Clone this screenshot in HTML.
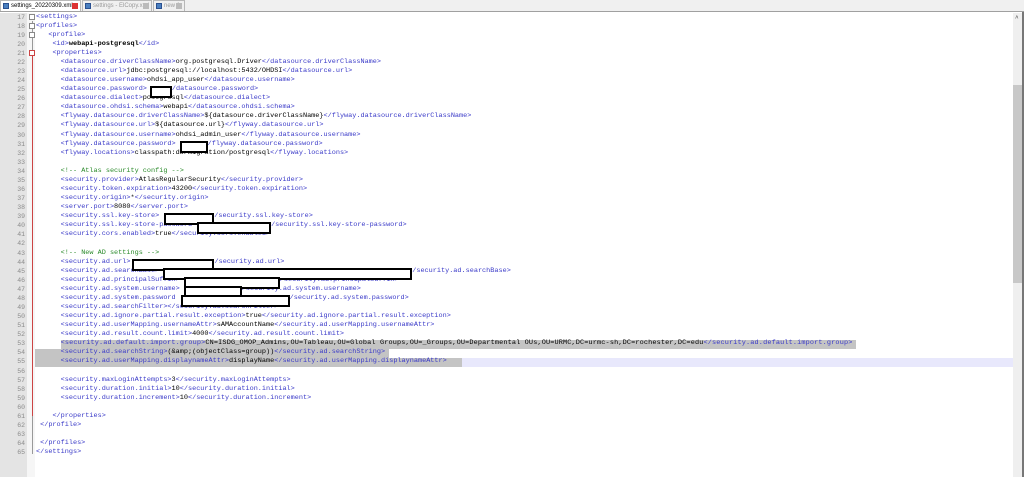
<!DOCTYPE html>
<html><head><meta charset="utf-8"><style>
*{margin:0;padding:0;box-sizing:border-box}
body{width:1024px;height:477px;background:#fff;position:relative;overflow:hidden;font-family:"Liberation Mono",monospace}
.tabbar{position:absolute;left:0;top:0;width:1024px;height:12px;background:#f0f0f0;border-bottom:1px solid #a0a0a0}
.tab{position:absolute;top:0;height:11px;font:6px "Liberation Sans",sans-serif;line-height:11px;padding-left:10px;border:1px solid #b8b8b8;border-bottom:none;white-space:nowrap;overflow:hidden}
.tab i{position:absolute;left:2px;top:2px;width:6px;height:6px;background:#4a7fc0;border:1px solid #2a5090}
.tab b{position:absolute;right:2px;top:2px;width:6px;height:6px;background:#d33;}
.gut{position:absolute;left:0;top:13px;width:27px;height:464px;background:#e4e4e4}
.fold{position:absolute;left:27px;top:13px;width:8px;height:464px;background:#f6f6f6}
.sb{position:absolute;left:1013px;top:13px;width:9px;height:464px;background:#efefef}
.thumb{position:absolute;left:1013px;top:85px;width:9px;height:198px;background:#c8c8c8}
.rb{position:absolute;left:1022px;top:12px;width:2px;height:465px;background:#777}
.ln{position:absolute;left:0;width:25px;text-align:right;font-size:6.5px;color:#8a8a8a;line-height:9.08px}
.code{position:absolute;left:36px;font-size:6.85px;line-height:9.08px;white-space:pre;color:#000}
.t{color:#3a3ac8}.c{color:#2a8a2a}.v{font-weight:bold}
.hl{position:absolute;height:9px}
.r{display:inline-block;height:0;position:relative;vertical-align:baseline}
.r::after{content:"";position:absolute;left:0;right:0;top:-4px;height:8px;border:2px solid #000;background:#fff}
.fb{position:absolute;left:29px;width:6px;height:6px;border:1px solid #888;background:#fff}
</style></head><body>
<div class="tabbar">
<div class="tab" style="left:0;width:81px;background:#fff">settings_20220309.xml<i></i><b></b></div>
<div class="tab" style="left:82px;width:70px;color:#999">settings - ElCopy.xml<i></i><b style="background:#bbb"></b></div>
<div class="tab" style="left:153px;width:32px;color:#999">new 1<i></i><b style="background:#bbb"></b></div>
</div>
<div class="gut"></div><div class="fold"></div>
<div style="position:absolute;left:32px;top:21px;width:1px;height:433px;background:#999"></div>
<div style="position:absolute;left:32px;top:56px;width:1px;height:360px;background:#c44"></div>
<div class="fb" style="top:14px"></div><div class="fb" style="top:23px"></div><div class="fb" style="top:32px"></div><div class="fb" style="top:50px;border-color:#c44"></div>

<div class="hl" style="left:61px;top:340px;width:795px;background:#c4c4c4"></div>
<div class="hl" style="left:35px;top:349px;width:354px;background:#c4c4c4"></div>
<div class="hl" style="left:35px;top:358px;width:978px;background:#e8e8fc"></div>
<div class="hl" style="left:35px;top:358px;width:427px;background:#c4c4c4"></div>

<div class="ln" style="top:12.5px">17<br>18<br>19<br>20<br>21<br>22<br>23<br>24<br>25<br>26<br>27<br>28<br>29<br>30<br>31<br>32<br>33<br>34<br>35<br>36<br>37<br>38<br>39<br>40<br>41<br>42<br>43<br>44<br>45<br>46<br>47<br>48<br>49<br>50<br>51<br>52<br>53<br>54<br>55<br>56<br>57<br>58<br>59<br>60<br>61<br>62<br>63<br>64<br>65</div>
<div class="code" style="top:12.5px"><span class="t">&lt;settings&gt;</span>
<span class="t">&lt;profiles&gt;</span>
   <span class="t">&lt;profile&gt;</span>
    <span class="t">&lt;id&gt;</span><span class="v">webapi-postgresql</span><span class="t">&lt;/id&gt;</span>
    <span class="t">&lt;properties&gt;</span>
      <span class="t">&lt;datasource.driverClassName&gt;</span>org.postgresql.Driver<span class="t">&lt;/datasource.driverClassName&gt;</span>
      <span class="t">&lt;datasource.url&gt;</span>jdbc:postgresql://localhost:5432/OHDSI<span class="t">&lt;/datasource.url&gt;</span>
      <span class="t">&lt;datasource.username&gt;</span>ohdsi_app_user<span class="t">&lt;/datasource.username&gt;</span>
      <span class="t">&lt;datasource.password&gt;</span><span class="r" style="margin-left:3px;width:22px"></span><span class="t">/datasource.password&gt;</span>
      <span class="t">&lt;datasource.dialect&gt;</span>postgresql<span class="t">&lt;/datasource.dialect&gt;</span>
      <span class="t">&lt;datasource.ohdsi.schema&gt;</span>webapi<span class="t">&lt;/datasource.ohdsi.schema&gt;</span>
      <span class="t">&lt;flyway.datasource.driverClassName&gt;</span>${datasource.driverClassName}<span class="t">&lt;/flyway.datasource.driverClassName&gt;</span>
      <span class="t">&lt;flyway.datasource.url&gt;</span>${datasource.url}<span class="t">&lt;/flyway.datasource.url&gt;</span>
      <span class="t">&lt;flyway.datasource.username&gt;</span>ohdsi_admin_user<span class="t">&lt;/flyway.datasource.username&gt;</span>
      <span class="t">&lt;flyway.datasource.password&gt;</span><span class="r" style="margin-left:4px;width:28px"></span><span class="t">/flyway.datasource.password&gt;</span>
      <span class="t">&lt;flyway.locations&gt;</span>classpath:db/migration/postgresql<span class="t">&lt;/flyway.locations&gt;</span>

      <span class="c">&lt;!-- Atlas security config --&gt;</span>
      <span class="t">&lt;security.provider&gt;</span>AtlasRegularSecurity<span class="t">&lt;/security.provider&gt;</span>
      <span class="t">&lt;security.token.expiration&gt;</span>43200<span class="t">&lt;/security.token.expiration&gt;</span>
      <span class="t">&lt;security.origin&gt;</span>*<span class="t">&lt;/security.origin&gt;</span>
      <span class="t">&lt;server.port&gt;</span>8080<span class="t">&lt;/server.port&gt;</span>
      <span class="t">&lt;security.ssl.key-store&gt;</span><span class="r" style="margin-left:5px;width:50px"></span><span class="t">/security.ssl.key-store&gt;</span>
      <span class="t">&lt;security.ssl.key-store-password</span><span class="r" style="margin-left:5px;width:74px"></span><span class="t">/security.ssl.key-store-password&gt;</span>
      <span class="t">&lt;security.cors.enabled&gt;</span>true<span class="t">&lt;/security.cors.enabled&gt;</span>

      <span class="c">&lt;!-- New AD settings --&gt;</span>
      <span class="t">&lt;security.ad.url&gt;</span><span class="r" style="margin-left:2px;width:82px"></span><span class="t">/security.ad.url&gt;</span>
      <span class="t">&lt;security.ad.searchBase&gt;</span><span class="r" style="margin-left:4px;width:249px"></span><span class="t">/security.ad.searchBase&gt;</span>
      <span class="t">&lt;security.ad.principalSuffix&gt;</span><span class="r" style="margin-left:4px;width:96px"></span><span class="t">/security.ad.principalSuffix&gt;</span>
      <span class="t">&lt;security.ad.system.username&gt;</span><span class="r" style="margin-left:4px;width:58px"></span><span class="t">/security.ad.system.username&gt;</span>
      <span class="t">&lt;security.ad.system.password</span><span class="r" style="margin-left:5px;width:109px"></span><span class="t">/security.ad.system.password&gt;</span>
      <span class="t">&lt;security.ad.searchFilter&gt;&lt;/security.ad.searchFilter&gt;</span>
      <span class="t">&lt;security.ad.ignore.partial.result.exception&gt;</span>true<span class="t">&lt;/security.ad.ignore.partial.result.exception&gt;</span>
      <span class="t">&lt;security.ad.userMapping.usernameAttr&gt;</span>sAMAccountName<span class="t">&lt;/security.ad.userMapping.usernameAttr&gt;</span>
      <span class="t">&lt;security.ad.result.count.limit&gt;</span>4000<span class="t">&lt;/security.ad.result.count.limit&gt;</span>
      <span style="letter-spacing:0.15px"><span class="t">&lt;security.ad.default.import.group&gt;</span>CN=ISDG_OMOP_Admins,OU=Tableau,OU=Global Groups,OU=_Groups,OU=Departmental OUs,OU=URMC,DC=urmc-sh,DC=rochester,DC=edu<span class="t">&lt;/security.ad.default.import.group&gt;</span></span>
      <span class="t">&lt;security.ad.searchString&gt;</span>(&amp;amp;(objectClass=group))<span class="t">&lt;/security.ad.searchString&gt;</span>
      <span class="t">&lt;security.ad.userMapping.displaynameAttr&gt;</span>displayName<span class="t">&lt;/security.ad.userMapping.displaynameAttr&gt;</span>

      <span class="t">&lt;security.maxLoginAttempts&gt;</span>3<span class="t">&lt;/security.maxLoginAttempts&gt;</span>
      <span class="t">&lt;security.duration.initial&gt;</span>10<span class="t">&lt;/security.duration.initial&gt;</span>
      <span class="t">&lt;security.duration.increment&gt;</span>10<span class="t">&lt;/security.duration.increment&gt;</span>

    <span class="t">&lt;/properties&gt;</span>
 <span class="t">&lt;/profile&gt;</span>

 <span class="t">&lt;/profiles&gt;</span>
<span class="t">&lt;/settings&gt;</span></div>

<div class="sb"></div><div class="thumb"></div><div class="rb"></div>
<div style="position:absolute;left:1015px;top:15px;font-size:6px;color:#333">^</div>
</body></html>
